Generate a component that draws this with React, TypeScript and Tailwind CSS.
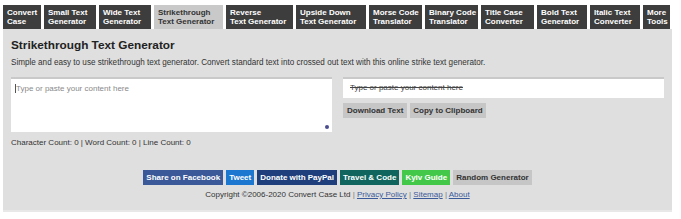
const tabs = [
  { label: ["Convert", "Case"], w: "w-[38px]" },
  { label: ["Small Text", "Generator"], w: "w-[52px]" },
  { label: ["Wide Text", "Generator"], w: "w-[52px]" },
  { label: ["Strikethrough", "Text Generator"], w: "w-[69px]", active: true },
  { label: ["Reverse", "Text Generator"], w: "w-[67px]" },
  { label: ["Upside Down", "Text Generator"], w: "w-[70px]" },
  { label: ["Morse Code", "Translator"], w: "w-[53px]" },
  { label: ["Binary Code", "Translator"], w: "w-[53px]" },
  { label: ["Title Case", "Converter"], w: "w-[53px]" },
  { label: ["Bold Text", "Generator"], w: "w-[50px]" },
  { label: ["Italic Text", "Converter"], w: "w-[50px]" },
  { label: ["More", "Tools"], w: "w-[27px]" },
];

const shareButtons = [
  { label: "Share on Facebook", cls: "bg-[#3b5998] text-white" },
  { label: "Tweet", cls: "bg-[#1b77cf] text-white" },
  { label: "Donate with PayPal", cls: "bg-[#1f3f7c] text-white" },
  { label: "Travel & Code", cls: "bg-[#10665e] text-white" },
  { label: "Kyiv Guide", cls: "bg-[#44c84a] text-white" },
  { label: "Random Generator", cls: "bg-[#c6c6c6] text-[#333]" },
];

export default function App() {
  return (
    <div className="h-[219px] w-[681px] bg-white font-['Liberation_Sans',Arial,sans-serif] text-[#333]">
      <nav className="flex gap-[3px] px-[3px] pt-[5px]">
        {tabs.map((tab) => (
          <div
            key={tab.label.join(" ")}
            className={`${tab.w} h-[24px] whitespace-nowrap px-[4px] pt-[3px] text-[8px] font-bold leading-[9px] ${
              tab.active ? "bg-[#c9c9c9] text-[#333]" : "bg-[#3d3d3d] text-white"
            }`}
          >
            <div>{tab.label[0]}</div>
            <div>{tab.label[1]}</div>
          </div>
        ))}
      </nav>

      <main className="mx-[3px] h-[183px] w-[669px] border-b-2 border-[#e8e8e8] bg-[#dfdfdf] px-[8px]">
        <h1 className="pt-[8px] text-[11.8px] font-bold leading-[16px] text-[#222]">
          Strikethrough Text Generator
        </h1>
        <p className="mt-[5px] text-[8.15px] leading-[10px]">
          Simple and easy to use strikethrough text generator. Convert standard text into crossed out
          text with this online strike text generator.
        </p>

        <div className="mt-[9px] flex gap-[11px]">
          <div className="w-[321px]">
            <div className="relative h-[55px] border-t-2 border-[#c9c9c9] bg-white px-[4px] pt-[5px] text-[8px] leading-[10px] text-[#8a8a8a]">
              <span className="border-l border-[#555]">Type or paste your content here</span>
              <span className="absolute bottom-[3px] right-[3px] h-[4px] w-[4px] rounded-full bg-[#4b4b8f]" />
            </div>
            <div className="mt-[6px] text-[8px] leading-[10px] text-[#333]">
              Character Count: 0 | Word Count: 0 | Line Count: 0
            </div>
          </div>

          <div className="w-[321px]">
            <div className="h-[21px] border-t-2 border-[#c9c9c9] bg-white px-[7px] pt-[4px] text-[8px] leading-[10px] text-[#444] line-through">
              Type or paste your content here
            </div>
            <div className="mt-[5px] flex gap-[3px]">
              <button className="h-[15px] bg-[#c6c6c6] px-[4px] text-[8px] font-bold text-[#333]">
                Download Text
              </button>
              <button className="h-[15px] bg-[#c6c6c6] px-[3px] text-[8px] font-bold text-[#333]">
                Copy to Clipboard
              </button>
            </div>
          </div>
        </div>

        <div className="mt-[22px] flex justify-center gap-[3px]">
          {shareButtons.map((b) => (
            <button key={b.label} className={`h-[15px] px-[3px] text-[8px] font-bold ${b.cls}`}>
              {b.label}
            </button>
          ))}
        </div>
        <div className="mt-[5px] text-center text-[8px] leading-[10px] text-[#333]">
          Copyright ©2006-2020 Convert Case Ltd <span className="text-[#777]">|</span>{" "}
          <a className="text-[#3a5a99] underline">Privacy Policy</a> <span className="text-[#777]">|</span>{" "}
          <a className="text-[#3a5a99] underline">Sitemap</a> <span className="text-[#777]">|</span>{" "}
          <a className="text-[#3a5a99] underline">About</a>
        </div>
      </main>
    </div>
  );
}
